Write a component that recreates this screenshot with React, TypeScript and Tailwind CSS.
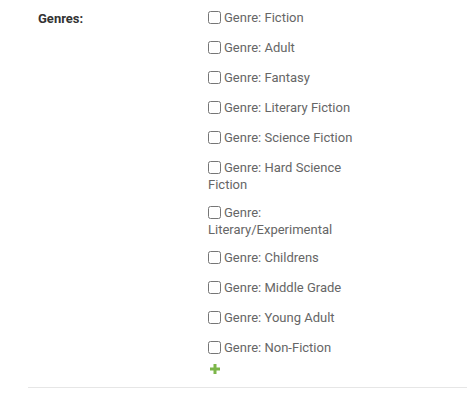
const genres = [
  "Fiction",
  "Adult",
  "Fantasy",
  "Literary Fiction",
  "Science Fiction",
  "Hard Science Fiction",
  "Literary/Experimental",
  "Childrens",
  "Middle Grade",
  "Young Adult",
  "Non-Fiction",
]

export default function App() {
  return (
    <div className="w-[467px] h-[400px] bg-white font-['Roboto',sans-serif] text-[13px]">
      <div className="ml-[28px] flex border-b border-[#e6e6e6] pt-[8px] pb-[7px]">
        <div className="w-[180px] pl-[10px] pt-[3px] font-bold text-[#333] leading-[normal]">Genres:</div>
        <div className="w-[152px] text-[#666] leading-[normal]">
          {genres.map(g => (
            <div key={g} className="mb-[11px]">
              <label>
                <input type="checkbox" className="my-[3px] mr-[3px] ml-0 align-[-2px]" />
                Genre: {g}
              </label>
            </div>
          ))}
          <div className="-mt-[4px] pl-[2px] h-[16px]">
            <svg width="10" height="10" viewBox="0 0 10 10">
              <path d="M5 0v10M0 5h10" stroke="#7cb649" strokeWidth="3" />
            </svg>
          </div>
        </div>
      </div>
    </div>
  )
}
